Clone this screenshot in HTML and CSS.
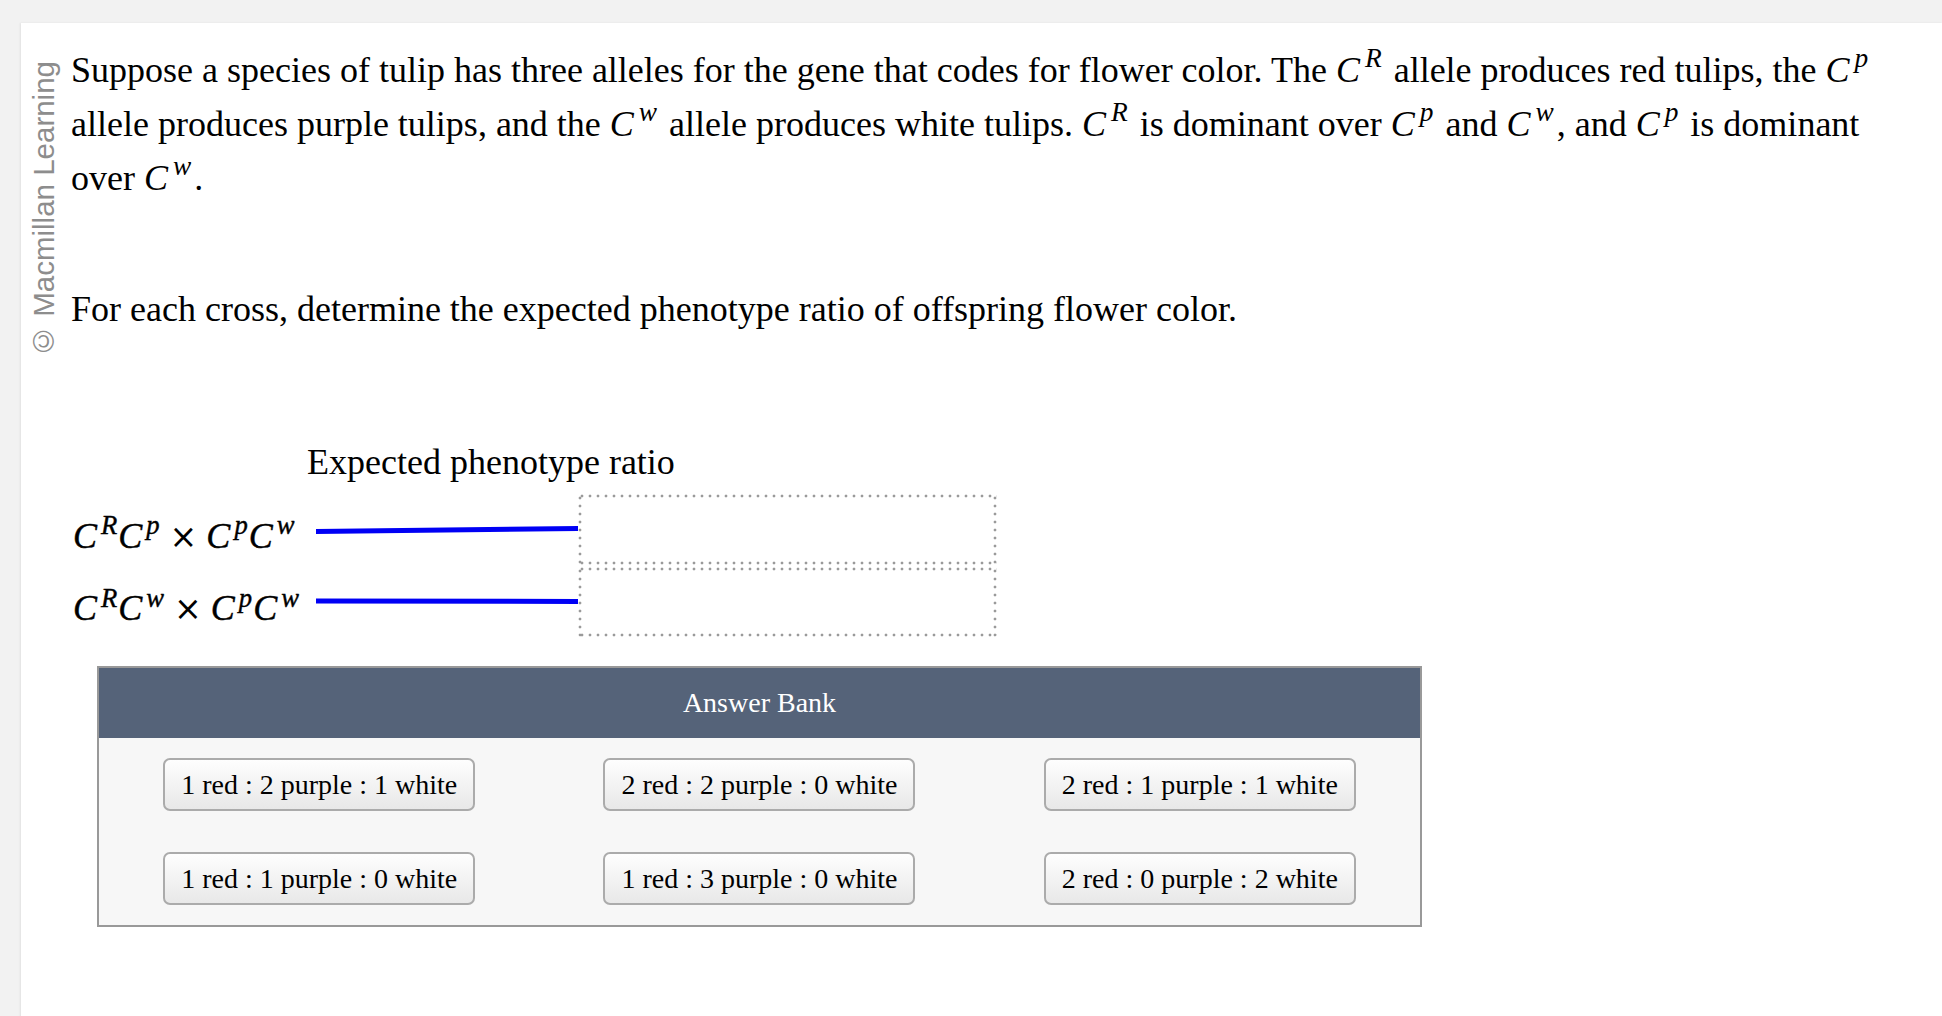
FILE: index.html
```html
<!DOCTYPE html>
<html lang="en">
<head>
<meta charset="utf-8">
<title>Tulip alleles</title>
<link rel="stylesheet" href="styles.css">
</head>
<body>
<div class="page">
  <div class="panel">
    <div class="credit"><span>© Macmillan Learning</span></div>
    <div class="content">
      <p class="intro">Suppose a species of tulip has three alleles for the gene that codes for flower color. The <span class="m"><i>C</i><sup>R</sup></span> allele produces red tulips, the <span class="m"><i>C</i><sup>p</sup></span> allele produces purple tulips, and the <span class="m"><i>C</i><sup>w</sup></span> allele produces white tulips. <span class="m"><i>C</i><sup>R</sup></span> is dominant over <span class="m"><i>C</i><sup>p</sup></span> and <span class="m"><i>C</i><sup>w</sup></span>, and <span class="m"><i>C</i><sup>p</sup></span> is dominant over <span class="m"><i>C</i><sup>w</sup></span>.</p>
      <p class="task">For each cross, determine the expected phenotype ratio of offspring flower color.</p>

      <div class="matching">
        <h2 class="col-title">Expected phenotype ratio</h2>
        <div class="rows">
          <div class="geno"><i>C</i><sup>R</sup><i>C</i><sup>p</sup> <span class="times">×</span> <i>C</i><sup>p</sup><i>C</i><sup>w</sup></div>
          <div class="link">
            <svg class="wire" width="262" height="71" viewBox="0 0 262 71"><line x1="0" y1="37.5" x2="262" y2="34.5" stroke="#0000f5" stroke-width="5"/></svg>
          </div>
          <div class="drop first"></div>

          <div class="geno"><i>C</i><sup>R</sup><i>C</i><sup>w</sup> <span class="times">×</span> <i>C</i><sup>p</sup><i>C</i><sup>w</sup></div>
          <div class="link">
            <svg class="wire" width="262" height="70" viewBox="0 0 262 70"><line x1="0" y1="34" x2="262" y2="34.5" stroke="#0000f5" stroke-width="5"/></svg>
          </div>
          <div class="drop"></div>
        </div>
      </div>

      <div class="bank">
        <div class="bank-head">Answer Bank</div>
        <div class="bank-body">
          <div class="chip">1 red : 2 purple : 1 white</div>
          <div class="chip">2 red : 2 purple : 0 white</div>
          <div class="chip">2 red : 1 purple : 1 white</div>
          <div class="chip">1 red : 1 purple : 0 white</div>
          <div class="chip">1 red : 3 purple : 0 white</div>
          <div class="chip">2 red : 0 purple : 2 white</div>
        </div>
      </div>
    </div>
  </div>
</div>
</body>
</html>
```
FILE: styles.css
```css
html, body {
  margin: 0;
  padding: 0;
}

body {
  background: #f2f2f2;
  font-family: "Liberation Serif", "Times New Roman", serif;
  color: #000;
  overflow: hidden;
}

.page {
  padding: 23px 0 0 21px;
}

.panel {
  background: #fff;
  display: flex;
  min-height: 1000px;
  box-shadow: -1px 0 2px rgba(0, 0, 0, 0.07);
}

.credit {
  flex: none;
  width: 50px;
  display: flex;
  justify-content: center;
  align-items: flex-start;
  padding-right: 5px;
  box-sizing: border-box;
}

.credit span {
  writing-mode: vertical-rl;
  transform: rotate(180deg);
  font-family: "Liberation Sans", Arial, sans-serif;
  font-size: 29.5px;
  line-height: 1;
  color: #8d8d8d;
  margin-top: 38px;
  white-space: nowrap;
}

.content {
  flex: 1;
  padding-top: 20px;
}

.intro,
.task {
  margin: 0;
  font-size: 36px;
  line-height: 54px;
  max-width: 1810px;
}

.task {
  margin-top: 77px;
}

.m {
  padding-right: 3px;
}

.m i,
.geno i {
  font-style: italic;
}

.m sup {
  font-style: italic;
  font-size: 0.76em;
  line-height: 0;
  vertical-align: 0.55em;
  margin-left: 5px;
}

.matching {
  margin-top: 99px;
}

.col-title {
  margin: 0 0 5px 236px;
  font-weight: normal;
  font-size: 36px;
  line-height: 54px;
}

.rows {
  display: grid;
  grid-template-columns: 245px 262px 419px;
  grid-auto-rows: auto;
  row-gap: 2px;
  align-items: center;
}

.geno {
  padding-left: 2px;
  font-size: 36px;
  line-height: 1;
  white-space: nowrap;
  padding-top: 12px;
  -webkit-text-stroke: 0.4px #000;
}

.geno sup {
  font-style: italic;
  font-size: 0.74em;
  line-height: 0;
  vertical-align: 0.5em;
  margin-left: 4px;
  margin-right: 1px;
}

.geno .times {
  font-style: normal;
  font-family: "DejaVu Sans", sans-serif;
  font-size: 0.92em;
  -webkit-text-stroke: 0;
}

.link {
  display: flex;
}

.wire {
  display: block;
}

.drop {
  height: 70px;
  box-sizing: border-box;
  border-radius: 3px;
  background:
    radial-gradient(circle, #9a9a9a 1.2px, rgba(154, 154, 154, 0) 1.7px) left top / 8px 4px repeat-x,
    radial-gradient(circle, #9a9a9a 1.2px, rgba(154, 154, 154, 0) 1.7px) left bottom / 8px 4px repeat-x,
    radial-gradient(circle, #9a9a9a 1.2px, rgba(154, 154, 154, 0) 1.7px) left top / 4px 8px repeat-y,
    radial-gradient(circle, #9a9a9a 1.2px, rgba(154, 154, 154, 0) 1.7px) right top / 4px 8px repeat-y,
    #fff;
}

.drop.first {
  height: 71px;
}

.bank {
  margin: 29px 0 0 26px;
  width: 1325px;
  box-sizing: border-box;
  border: 2px solid #999;
  background: #f7f7f7;
}

.bank-head {
  height: 70px;
  background: #556379;
  color: #fff;
  font-size: 28px;
  display: flex;
  align-items: center;
  justify-content: center;
}

.bank-body {
  display: grid;
  grid-template-columns: repeat(3, 1fr);
  justify-items: center;
  row-gap: 41px;
  padding: 20px 0;
}

.chip {
  width: 312px;
  height: 53px;
  box-sizing: border-box;
  border: 2px solid #ababab;
  border-radius: 7px;
  background: linear-gradient(#fefefe, #e8e8e8);
  display: flex;
  align-items: center;
  justify-content: center;
  font-size: 28px;
  color: #000;
}
```
